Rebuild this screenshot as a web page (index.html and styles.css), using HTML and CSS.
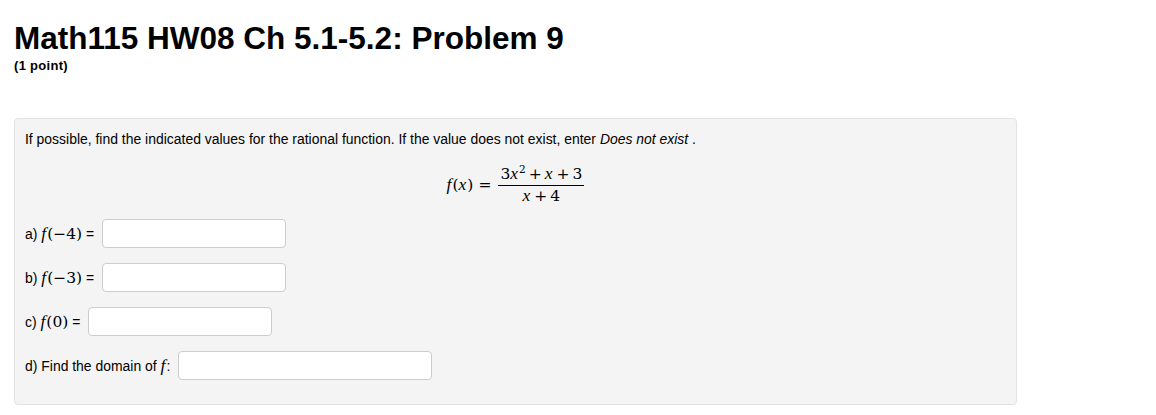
FILE: index.html
```html
<!DOCTYPE html>
<html>
<head>
<meta charset="utf-8">
<link rel="stylesheet" href="styles.css">
</head>
<body>
<div class="page">
  <h2 class="title">Math115 HW08 Ch 5.1-5.2: Problem 9</h2>
  <div class="points">(1 point)</div>
  <div class="well">
    <p class="intro">If possible, find the indicated values for the rational function. If the value does not exist, enter <i>Does not exist</i> .</p>
    <div class="display">
      <span class="m"><i>f</i>(<i>x</i>)</span><span class="m eq">=</span>
      <span class="frac">
        <span class="num m">3<i>x</i><sup>2</sup><span class="op">+</span><i>x</i><span class="op">+</span>3</span>
        <span class="den m"><i>x</i><span class="op">+</span>4</span>
      </span>
    </div>
    <div class="row"><span class="lbl">a) <span class="m"><i>f</i>(−4)</span> =</span><input class="ans" type="text"></div>
    <div class="row"><span class="lbl">b) <span class="m"><i>f</i>(−3)</span> =</span><input class="ans" type="text"></div>
    <div class="row"><span class="lbl">c) <span class="m"><i>f</i>(0)</span> =</span><input class="ans" type="text"></div>
    <div class="row"><span class="lbl">d) Find the domain of <span class="m"><i>f</i></span>:</span><input class="ans wide" type="text"></div>
  </div>
</div>
</body>
</html>
```
FILE: styles.css
```css
html, body {
  margin: 0;
  padding: 0;
  background: #fff;
}
body {
  font-family: "Liberation Sans", Arial, sans-serif;
  color: #000;
}
.page {
  padding: 18px 0 0 14px;
  width: 1003px;
}
.title {
  margin: 0;
  font-size: 31.5px;
  line-height: 40px;
  font-weight: bold;
}
.points {
  font-size: 13px;
  font-weight: bold;
  line-height: 16px;
  letter-spacing: 0.3px;
}
.well {
  margin-top: 44px;
  background: #f4f4f4;
  border: 1px solid #e3e3e3;
  border-radius: 4px;
  padding: 11px 10px 24px 10px;
  font-size: 13.95px;
}
.intro {
  margin: 0;
  line-height: 18px;
}
.m {
  font-family: "DejaVu Serif", "Liberation Serif", serif;
  font-size: 15.5px;
}
.m i {
  font-family: "Liberation Serif", "Times New Roman", serif;
  font-style: italic;
  font-size: 17.5px;
  padding-right: 1px;
}
.display {
  display: flex;
  justify-content: center;
  align-items: center;
  margin-top: 16px;
  margin-bottom: 13px;
}
.eq {
  margin: 0 5px 0 5px;
}
.op {
  margin: 0 3px;
}
.frac {
  display: inline-flex;
  flex-direction: column;
  align-items: center;
  margin-left: 2px;
}
.num {
  line-height: 18px;
  padding: 0 2px 2px;
  border-bottom: 1px solid #000;
}
.num sup {
  font-size: 10.5px;
  line-height: 0;
  vertical-align: 6px;
}
.den {
  line-height: 18px;
  padding-top: 0;
}
.row {
  display: flex;
  align-items: center;
  height: 30px;
  margin-bottom: 14px;
}
.row:last-child {
  margin-bottom: 0;
}
.lbl {
  margin-right: 8px;
  white-space: pre;
}
.ans {
  width: 184px;
  height: 29px;
  box-sizing: border-box;
  border: 1px solid #cccccc;
  border-radius: 4px;
  background: #fff;
  padding: 4px 6px;
  font-size: 13px;
  margin: 0;
}
.ans.wide {
  width: 254px;
}
```
